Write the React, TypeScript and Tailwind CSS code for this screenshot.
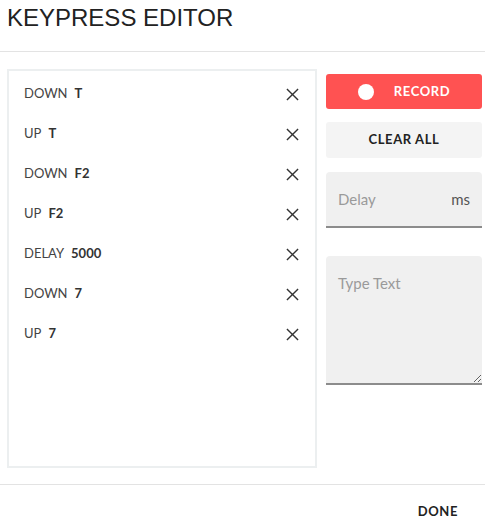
import { useState } from "react";

type Step = { kind: string; value: string };

const initialSteps: Step[] = [
  { kind: "DOWN", value: "T" },
  { kind: "UP", value: "T" },
  { kind: "DOWN", value: "F2" },
  { kind: "UP", value: "F2" },
  { kind: "DELAY", value: "5000" },
  { kind: "DOWN", value: "7" },
  { kind: "UP", value: "7" },
];

function CloseIcon() {
  return (
    <svg viewBox="0 0 14 14" className="w-[13px] h-[13px]" fill="none" stroke="#333" strokeWidth="1.5">
      <path d="M1 1 L13 13 M13 1 L1 13" />
    </svg>
  );
}

export default function App() {
  const [steps, setSteps] = useState<Step[]>(initialSteps);

  return (
    <div className="w-[485px] h-[524px] bg-white flex flex-col font-['Lato',sans-serif] text-[#333]">
      {/* Header */}
      <div className="h-[52px] border-b border-[#e3e3e3] pl-[7px] pt-[4px] shrink-0">
        <h1 className="font-['Liberation_Sans',Arial,sans-serif] text-[24px] leading-[28px] text-[#222]">
          KEYPRESS EDITOR
        </h1>
      </div>

      {/* Body */}
      <div className="flex pl-[7px] pr-[3px] pt-[17px] gap-[9px] h-[432px] shrink-0">
        {/* Step list */}
        <div className="w-[310px] shrink-0 h-[399px] border-2 border-[#eceff0] pt-[3px]">
          {steps.map((step, index) => (
            <div key={index} className="h-[40px] flex items-center justify-between pl-[15px] pr-[15px]">
              <div className="flex items-center gap-[7px] text-[13px]">
                <span className="text-[#444]">{step.kind}</span>
                <span className="font-bold text-[#333]">{step.value}</span>
              </div>
              <button
                className="w-[16px] h-[16px] flex items-center justify-center"
                onClick={() => setSteps(steps.filter((_, i) => i !== index))}
              >
                <CloseIcon />
              </button>
            </div>
          ))}
        </div>

        {/* Controls */}
        <div className="w-[156px] shrink-0 pt-[5px] flex flex-col">
          <button className="h-[35px] rounded-[3px] bg-[#ff5252] flex items-center justify-center gap-[20px] text-white">
            <span className="w-[16px] h-[16px] rounded-full bg-white" />
            <span className="text-[13px] font-bold tracking-[0.6px]">RECORD</span>
          </button>
          <button
            className="mt-[13px] h-[36px] rounded-[3px] bg-[#f4f4f4] text-[13px] font-bold tracking-[0.6px] text-[#222]"
            onClick={() => setSteps([])}
          >
            CLEAR ALL
          </button>
          <div className="mt-[14px] h-[56px] bg-[#f0f0f0] rounded-t-[4px] border-b-2 border-[#8c8c8c] flex items-center pl-[12px] pr-[12px] pt-[1px]">
            <input
              className="flex-1 min-w-0 bg-transparent outline-none text-[15px] text-[#333] placeholder:text-[#9a9a9a]"
              placeholder="Delay"
            />
            <span className="text-[15px] text-[#555]">ms</span>
          </div>
          <textarea
            className="mt-[28px] h-[129px] bg-[#f0f0f0] rounded-t-[4px] border-b-2 border-[#8c8c8c] px-[12px] pt-[17px] outline-none text-[15px] leading-[20px] text-[#333] placeholder:text-[#9a9a9a]"
            placeholder="Type Text"
          />
        </div>
      </div>

      {/* Footer */}
      <div className="flex-1 border-t border-[#e3e3e3] flex items-center justify-end pr-[27px] pt-[14px]">
        <button className="text-[13px] font-bold tracking-[0.6px] text-[#222]">DONE</button>
      </div>
    </div>
  );
}
